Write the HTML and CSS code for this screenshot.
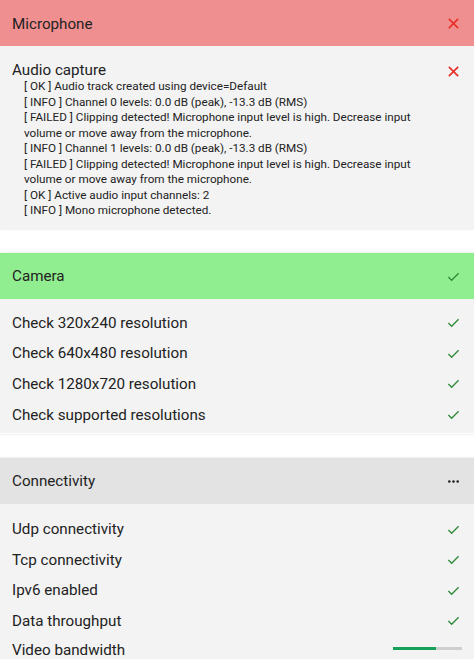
FILE: index.html
```html
<!DOCTYPE html>
<html>
<head>
<meta charset="utf-8">
<link rel="stylesheet" href="styles.css">
</head>
<body>
<div class="page">
  <section class="card">
    <div class="head head-fail">
      <span class="title">Microphone</span>
      <svg class="icon" viewBox="0 0 14 14"><path d="M2 2L12 12M12 2L2 12" stroke="#e8302a" stroke-width="1.8" fill="none"/></svg>
    </div>
    <div class="body body-log">
      <div class="row row-log">
        <div class="logwrap">
          <div class="name">Audio capture</div>
          <div class="log">
            <div>[ OK ] Audio track created using device=Default</div>
            <div>[ INFO ] Channel 0 levels: 0.0 dB (peak), -13.3 dB (RMS)</div>
            <div>[ FAILED ] Clipping detected! Microphone input level is high. Decrease input volume or move away from the microphone.</div>
            <div>[ INFO ] Channel 1 levels: 0.0 dB (peak), -13.3 dB (RMS)</div>
            <div>[ FAILED ] Clipping detected! Microphone input level is high. Decrease input volume or move away from the microphone.</div>
            <div>[ OK ] Active audio input channels: 2</div>
            <div>[ INFO ] Mono microphone detected.</div>
          </div>
        </div>
        <svg class="icon icon-top" viewBox="0 0 14 14"><path d="M2 2L12 12M12 2L2 12" stroke="#e8302a" stroke-width="1.8" fill="none"/></svg>
      </div>
    </div>
  </section>

  <section class="card">
    <div class="head head-ok">
      <span class="title">Camera</span>
      <svg class="icon" viewBox="0 0 14 14"><path d="M1.5 7.5L5 11L12.5 3.5" stroke="#2e8b3a" stroke-width="1.4" fill="none"/></svg>
    </div>
    <div class="body body-cam">
      <div class="row"><span class="name">Check 320x240 resolution</span><svg class="icon" viewBox="0 0 14 14"><path d="M1.5 7.5L5 11L12.5 3.5" stroke="#2e8b3a" stroke-width="1.4" fill="none"/></svg></div>
      <div class="row"><span class="name">Check 640x480 resolution</span><svg class="icon" viewBox="0 0 14 14"><path d="M1.5 7.5L5 11L12.5 3.5" stroke="#2e8b3a" stroke-width="1.4" fill="none"/></svg></div>
      <div class="row"><span class="name">Check 1280x720 resolution</span><svg class="icon" viewBox="0 0 14 14"><path d="M1.5 7.5L5 11L12.5 3.5" stroke="#2e8b3a" stroke-width="1.4" fill="none"/></svg></div>
      <div class="row"><span class="name">Check supported resolutions</span><svg class="icon" viewBox="0 0 14 14"><path d="M1.5 7.5L5 11L12.5 3.5" stroke="#2e8b3a" stroke-width="1.4" fill="none"/></svg></div>
    </div>
  </section>

  <section class="card card-last">
    <div class="head head-run">
      <span class="title">Connectivity</span>
      <svg class="icon" viewBox="0 0 14 14"><circle cx="2.5" cy="7" r="1.4" fill="#222"/><circle cx="7" cy="7" r="1.4" fill="#222"/><circle cx="11.5" cy="7" r="1.4" fill="#222"/></svg>
    </div>
    <div class="body body-conn">
      <div class="row"><span class="name">Udp connectivity</span><svg class="icon" viewBox="0 0 14 14"><path d="M1.5 7.5L5 11L12.5 3.5" stroke="#2e8b3a" stroke-width="1.4" fill="none"/></svg></div>
      <div class="row"><span class="name">Tcp connectivity</span><svg class="icon" viewBox="0 0 14 14"><path d="M1.5 7.5L5 11L12.5 3.5" stroke="#2e8b3a" stroke-width="1.4" fill="none"/></svg></div>
      <div class="row"><span class="name">Ipv6 enabled</span><svg class="icon" viewBox="0 0 14 14"><path d="M1.5 7.5L5 11L12.5 3.5" stroke="#2e8b3a" stroke-width="1.4" fill="none"/></svg></div>
      <div class="row"><span class="name">Data throughput</span><svg class="icon" viewBox="0 0 14 14"><path d="M1.5 7.5L5 11L12.5 3.5" stroke="#2e8b3a" stroke-width="1.4" fill="none"/></svg></div>
      <div class="row row-end"><span class="name">Video bandwidth</span><div class="progress"><div class="bar" style="width:62%"></div></div></div>
    </div>
  </section>
</div>
</body>
</html>
```

FILE: styles.css
```css
html, body {
  margin: 0;
  padding: 0;
  background: #ffffff;
}
body {
  font-family: Roboto, "Noto Sans", sans-serif;
  color: #222222;
}
.page {
  display: flex;
  flex-direction: column;
  gap: 24px;
  height: 663px;
  overflow: hidden;
}
.card {
  box-shadow: 0 0 2px rgba(0,0,0,0.16);
  flex: none;
}
.head {
  height: 46px;
  display: flex;
  align-items: center;
  justify-content: space-between;
  padding: 1px 14px 0 12px;
  box-sizing: border-box;
  font-size: 15.2px;
}
.head-fail { background: #f08f8f; }
.head-ok { background: #90ee90; }
.head-run { background: #e3e3e3; }
.body {
  background: #f3f3f3;
  padding: 10px 14px 2px 12px;
}
.body-log {
  padding-top: 16px;
  padding-bottom: 10px;
}
.body-cam {
  padding-top: 9px;
  padding-bottom: 3px;
  margin-bottom: 1px;
}
.body-conn {
  padding-bottom: 0;
}
.row {
  height: 30.6px;
  display: flex;
  align-items: center;
  justify-content: space-between;
  font-size: 15.2px;
}
.row-end {
  height: 22px;
  align-items: flex-start;
  padding-top: 5px;
  box-sizing: border-box;
}
.row-log {
  height: auto;
  align-items: flex-start;
}
.logwrap .name {
  font-size: 15.2px;
  line-height: 17px;
}
.log {
  padding-left: 12px;
  padding-right: 14px;
  font-size: 11.7px;
  line-height: 15.5px;
}
.icon {
  width: 13px;
  height: 13px;
  flex: none;
}
.icon-top {
  margin-top: 3px;
}
.progress {
  width: 69px;
  height: 3px;
  background: #cfcfcf;
  margin-right: -2px;
  margin-top: 6px;
}
.bar {
  height: 100%;
  background: #16a05a;
}
```
